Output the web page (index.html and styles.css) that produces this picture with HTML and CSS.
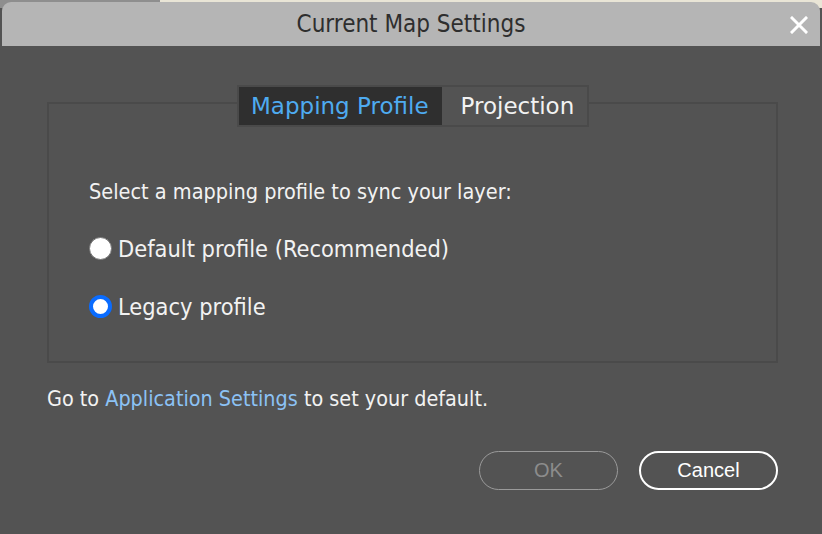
FILE: index.html
```html
<!DOCTYPE html>
<html lang="en">
<head>
    <meta charset="UTF-8" />
    <title>Current Map Settings</title>
    <link rel="stylesheet" href="styles.css">
</head>
<body>
    <div class="backdrop">
        <div class="backdrop-left"></div>
        <div class="backdrop-map"></div>
    </div>
    <div class="dialog">
        <div class="titlebar">
            <span class="title">Current Map Settings</span>
            <span class="close">
                <svg width="18" height="18" viewBox="0 0 18 18"><path d="M2 2 L16 16 M16 2 L2 16" stroke="#fff" stroke-width="3" stroke-linecap="square"/></svg>
            </span>
        </div>
        <div class="body">
            <div class="group">
                <div class="tabs">
                    <div class="tab active">Mapping Profile</div>
                    <div class="tab">Projection</div>
                </div>
                <p class="prompt">Select a mapping profile to sync your layer:</p>
                <label class="option"><span class="radio"></span>Default profile (Recommended)</label>
                <label class="option"><span class="radio checked"></span>Legacy profile</label>
            </div>
            <p class="hint">Go to <a class="link">Application Settings</a> to set your default.</p>
            <div class="actions">
                <button class="btn disabled">OK</button>
                <button class="btn">Cancel</button>
            </div>
        </div>
    </div>
</body>
</html>
```

FILE: styles.css
```css
* {
    margin: 0;
    padding: 0;
    box-sizing: border-box;
}

body {
    width: 822px;
    height: 534px;
    overflow: hidden;
    background: #535353;
    font-family: 'DejaVu Sans Condensed', 'DejaVu Sans', sans-serif;
}

.backdrop {
    display: flex;
    height: 8px;
}

.backdrop-left {
    width: 160px;
    background: #8e8e8e;
}

.backdrop-map {
    flex: 1;
    background: #e9e5d6;
}

.dialog {
    margin: -6px 2px 0 2px;
    border-radius: 9px 9px 0 0;
    overflow: hidden;
    background: #535353;
    height: 532px;
}

.titlebar {
    height: 44px;
    background: #b5b5b5;
    display: flex;
    align-items: center;
    justify-content: center;
    position: relative;
}

.title {
    font-size: 24px;
    color: #2e2e2e;
}

.close {
    position: absolute;
    right: 12px;
    top: 14px;
    width: 18px;
    height: 18px;
    display: flex;
}

.body {
    padding: 56px 42px 0 45px;
}

.group {
    border: 2px solid #4a4a4a;
    height: 261px;
    padding: 0 0 0 40px;
}

.tabs {
    display: flex;
    width: fit-content;
    margin: -19px auto 0 148px;
    border: 2px solid #4a4a4a;
    background: #535353;
}

.tab {
    height: 38px;
    display: flex;
    align-items: center;
    padding: 0 13px;
    font-size: 23px;
    color: #f2f2f2;
    font-family: 'DejaVu Sans', sans-serif;
}

.tab.active {
    background: #2f2f2f;
    color: #4eabf0;
    padding: 0 13px 0 12px;
    border-right: 6px solid #535353;
}

.prompt {
    margin-top: 52px;
    font-size: 21.5px;
    color: #f2f2f2;
}

.option {
    display: flex;
    align-items: center;
    font-size: 23.4px;
    color: #f2f2f2;
    margin-top: 28px;
    height: 33px;
}

.option + .option {
    margin-top: 25px;
}

.radio {
    width: 23px;
    height: 23px;
    border-radius: 50%;
    background: #fff;
    border: 1.5px solid #777;
    margin-right: 6px;
}

.radio.checked {
    border: 4px solid #0a6cff;
}

.hint {
    margin-top: 23px;
    font-size: 21.4px;
    color: #f2f2f2;
}

.link {
    color: #8cc2f5;
}

.actions {
    display: flex;
    justify-content: flex-end;
    gap: 21px;
    margin-top: 40px;
}

.btn {
    width: 139px;
    height: 39px;
    border-radius: 20px;
    background: transparent;
    border: 2px solid #fff;
    color: #fff;
    font-family: 'Liberation Sans', Arial, sans-serif;
    font-size: 20px;
}

.btn.disabled {
    border-color: #9a9a9a;
    color: #8c8c8c;
    border-width: 1.5px;
}
```
